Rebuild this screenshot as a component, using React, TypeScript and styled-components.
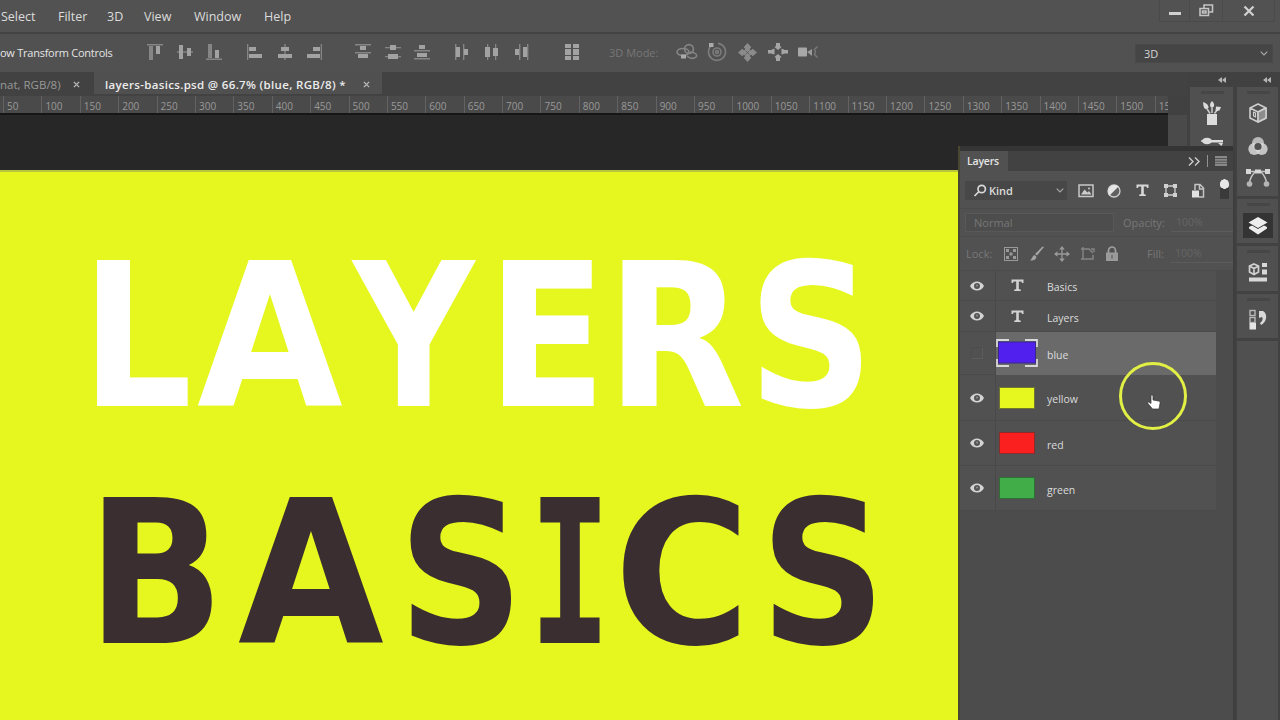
import React from 'react';
import styled, { createGlobalStyle } from 'styled-components';

const Global = createGlobalStyle`
  * { box-sizing: border-box; }
  body { margin: 0; overflow: hidden; background: #282828; }
`;

const App_ = styled.div`
  position: relative;
  width: 1280px;
  height: 720px;
  overflow: hidden;
  display: flex;
  flex-direction: column;
  background: #282828;
  color: #d6d6d6;
  font-family: 'Open Sans', 'Noto Sans', sans-serif;
  white-space: nowrap;
`;

/* ---------- menu bar ---------- */
const MenuBar = styled.header`
  height: 34px;
  flex: none;
  display: flex;
  justify-content: space-between;
  background: #525252;
  border-bottom: 2px solid #434343;
`;
const Menu = styled.nav`
  display: flex;
  padding-left: 1px;
  font-size: 12.5px;
  line-height: 33px;
  color: #dcdcdc;
`;
const MenuItem = styled.span<{ $w: number }>`
  width: ${(p) => p.$w}px;
`;
const WindowButtons = styled.div`
  display: flex;
  height: 22px;
  margin-right: 5px;
  border: 1px solid #4a4a4a;
  border-top: 0;
`;
const WindowButton = styled.div<{ $w: number }>`
  width: ${(p) => p.$w}px;
  display: flex;
  align-items: center;
  justify-content: center;
  & + & { border-left: 1px solid #4b4b4b; }
`;

/* ---------- options bar ---------- */
const OptionsBar = styled.div`
  height: 38px;
  flex: none;
  display: flex;
  align-items: center;
  background: #515151;
  font-size: 11px;
`;
const TransformLabel = styled.span`
  width: 147px;
  margin-top: -2px;
  letter-spacing: -0.25px;
  color: #e4e4e4;
`;
const IconGroup = styled.div<{ $w: number; $slot: number }>`
  width: ${(p) => p.$w}px;
  display: flex;
  align-items: center;
  margin-top: -2px;
  & > svg { flex: none; margin-right: ${(p) => p.$slot - 16}px; }
`;
const ModeIcons = styled.div`
  display: grid;
  grid-template-columns: repeat(5, 30.3px);
  align-items: center;
  justify-items: center;
  margin-top: -2px;
`;
const ModeLabel = styled.span`
  width: 63px;
  color: #777;
  margin-top: -2px;
`;
const WorkspaceSelect = styled.div`
  width: 138px;
  height: 19px;
  margin-left: auto;
  margin-right: 7px;
  padding: 0 4px 0 8px;
  display: flex;
  align-items: center;
  justify-content: space-between;
  background: #454545;
  border: 1px solid #494949;
  font-size: 11px;
`;

/* ---------- workspace ---------- */
const Workspace = styled.div`
  flex: 1;
  min-height: 0;
  display: flex;
  background: #414141;
`;
const DocumentArea = styled.main`
  width: 1187px;
  display: flex;
  flex-direction: column;
`;
const TabBar = styled.div`
  height: 24px;
  flex: none;
  display: flex;
  background: #424242;
  font-size: 11.5px;
`;
const Tab = styled.div<{ $w: number; $active?: boolean }>`
  width: ${(p) => p.$w}px;
  height: 22px;
  display: flex;
  align-items: center;
  justify-content: space-between;
  padding: 2px ${(p) => (p.$active ? 12 : 14)}px 0 ${(p) => (p.$active ? 11 : 0)}px;
  background: ${(p) => (p.$active ? '#505050' : '#424242')};
  color: ${(p) => (p.$active ? '#ececec' : '#989898')};
  font-weight: ${(p) => (p.$active ? 600 : 400)};
  letter-spacing: ${(p) => (p.$active ? 0.33 : 0)}px;
`;
const Ruler = styled.div`
  width: 1168px;
  height: 19px;
  flex: none;
  display: flex;
  overflow: hidden;
  padding-left: 3px;
  background: #4a4a4a;
  border-bottom: 2px solid #161616;
`;
const Tick = styled.div`
  width: 38.4px;
  flex: none;
  padding-left: 3px;
  border-left: 1px solid #626262;
  font-size: 10px;
  line-height: 20px;
  color: #999;
`;
const CanvasRow = styled.div`
  flex: 1;
  display: flex;
  min-height: 0;
  background: #4a4a4a;
`;
const Pasteboard = styled.div`
  width: 1168px;
  padding-top: 55px;
  background: #272727;
`;
const Artboard = styled.div`
  width: 958px;
  height: 560px;
  padding-top: 47px;
  border-top: 2px solid #b9c63c;
  background: #e6f61f;
  font-family: 'DejaVu Sans Condensed', 'DejaVu Sans', sans-serif;
  font-stretch: condensed;
  font-weight: 700;
  font-size: 200.3px;
  font-kerning: none;
`;
const Headline = styled.div<{ $left: number; $dark?: boolean }>`
  height: 236.5px;
  line-height: 236.5px;
  display: flex;
  padding-left: ${(p) => p.$left}px;
  color: ${(p) => (p.$dark ? '#3a2e31' : '#fff')};
`;
const Glyph = styled.span<{ $w: number; $sx?: number; $mono?: boolean }>`
  width: ${(p) => p.$w}px;
  flex: none;
  transform: scaleX(${(p) => p.$sx || 1});
  transform-origin: left;
  ${(p) => p.$mono && "font-family: 'DejaVu Sans Mono', monospace;"}
`;

/* ---------- docks ---------- */
const Dock = styled.aside<{ $w: number; $gap: number }>`
  width: ${(p) => p.$w}px;
  margin-left: ${(p) => p.$gap}px;
  display: flex;
  flex-direction: column;
`;
const DockHead = styled.div`
  height: 15px;
  flex: none;
  display: flex;
  justify-content: flex-end;
  align-items: center;
  padding-right: 7px;
`;
const DockGroup = styled.div<{ $h: number }>`
  height: ${(p) => p.$h}px;
  flex: none;
  display: flex;
  flex-direction: column;
  align-items: center;
  padding-left: 1px;
  background: #505050;
  border-bottom: 3px solid #424242;
`;
const DockFill = styled.div`
  flex: 1;
  background: #505050;
`;
const Grip = styled.div`
  width: 23px;
  height: 3px;
  margin-top: 4px;
  flex: none;
  background: #464646;
`;
const DockIcon = styled.div<{ $h: number; $selected?: boolean }>`
  width: 30px;
  height: ${(p) => p.$h}px;
  flex: none;
  display: flex;
  align-items: center;
  justify-content: center;
  background: ${(p) => (p.$selected ? '#343434' : 'transparent')};
`;

/* ---------- floating layers panel ---------- */
const Panel = styled.section`
  position: absolute;
  left: 958px;
  top: 146px;
  width: 277px;
  height: 574px;
  display: flex;
  flex-direction: column;
  border-left: 2px solid #484832;
  border-right: 2px solid #3e3e3e;
  background: #4c4c4c;
  font-size: 11px;
`;
const PanelTabs = styled.div`
  height: 25px;
  flex: none;
  display: flex;
  justify-content: space-between;
  border-top: 5px solid #353535;
  background: #424242;
`;
const PanelTab = styled.div`
  width: 48px;
  padding-left: 7px;
  background: #515151;
  color: #e4e4e4;
  font-weight: 600;
  font-size: 10.5px;
  line-height: 20px;
  letter-spacing: -0.2px;
`;
const PanelTools = styled.div`
  display: flex;
  align-items: center;
  gap: 7px;
  padding-right: 6px;
`;
const ToolDivider = styled.i`
  width: 1px;
  height: 12px;
  background: #929292;
`;
const PanelRow = styled.div<{ $h: number; $dim?: boolean }>`
  height: ${(p) => p.$h}px;
  flex: none;
  display: flex;
  align-items: center;
  padding-left: 5px;
  background: #515151;
  border-bottom: 1px solid #4b4b4b;
  color: ${(p) => (p.$dim ? '#777' : '#dcdcdc')};
`;
const KindSelect = styled.div`
  width: 102px;
  height: 19px;
  margin-top: 2px;
  margin-right: 5px;
  padding: 0 3px 0 8px;
  display: flex;
  align-items: center;
  gap: 2px;
  background: #474747;
  font-weight: 600;
  & > svg:last-child { margin-left: auto; }
`;
const FilterIcons = styled.div`
  display: grid;
  grid-template-columns: repeat(5, 28px);
  align-items: center;
  justify-items: center;
  margin-top: 2px;
`;
const Toggle = styled.div`
  width: 9px;
  height: 20px;
  margin-left: 8px;
  margin-top: -2px;
  border-radius: 5px 5px 0 0;
  background: radial-gradient(circle at 4.5px 5px, #e6e6e6 4.5px, transparent 5px), linear-gradient(#515151 9px, #3a3a3a 9px);
`;
const BlendSelect = styled.div`
  width: 149px;
  height: 19px;
  padding-left: 8px;
  line-height: 17px;
  border: 1px solid #585858;
  background: #4d4d4d;
`;
const DimLabel = styled.span<{ $w: number; $left?: number }>`
  width: ${(p) => p.$w}px;
  margin-left: ${(p) => p.$left || 0}px;
`;
const DimValue = styled.span`
  flex: 1;
  height: 18px;
  padding-left: 5px;
  line-height: 17px;
  font-size: 10.5px;
  color: #656565;
  border-bottom: 1px solid #5c5c5c;
`;
const LockIcons = styled.div`
  display: flex;
  gap: 9.5px;
  width: 144px;
  margin-left: -1px;
`;
const LayerList = styled.div`
  width: 256px;
  flex: none;
`;
const Layer = styled.div<{ $h: number }>`
  height: ${(p) => p.$h}px;
  display: flex;
  background: #515151;
`;
const EyeCell = styled.div`
  width: 36px;
  display: flex;
  align-items: center;
  justify-content: center;
  padding-right: 1px;
  border-right: 1px solid #494949;
  border-bottom: 1px solid #4a4a4a;
`;
const EmptyEye = styled.i`
  width: 12px;
  height: 12px;
  border: 1px solid #5c5c5c;
  border-top-color: #4c4c4c;
  border-left-color: #4c4c4c;
`;
const LayerBody = styled.div<{ $selected?: boolean }>`
  flex: 1;
  display: flex;
  align-items: center;
  background: ${(p) => (p.$selected ? '#6a6a6a' : '#515151')};
  border-bottom: 1px solid ${(p) => (p.$selected ? '#6a6a6a' : '#4a4a4a')};
`;
const ThumbCell = styled.div`
  width: 51px;
  display: flex;
  justify-content: center;
  padding-right: 9px;
`;
const Swatch = styled.div<{ $c: string; $edge: string }>`
  width: 36px;
  height: 22px;
  border: 1px solid ${(p) => p.$edge};
  background: ${(p) => p.$c};
`;
const LayerName = styled.span`
  color: #dcdcdc;
  font-size: 10.5px;
  padding-top: 3px;
`;
const PointerRing = styled.div`
  position: absolute;
  left: 1119px;
  top: 362px;
  width: 68px;
  height: 68px;
  display: flex;
  align-items: center;
  justify-content: center;
  padding: 11px 0 0 2px;
  border: 3px solid #e2ef45;
  border-radius: 50%;
`;

/* ---------- icons ---------- */
type Box = [number, number, number, number];
const Boxes = ({ b, thin = [], c = '#a2a2a2' }: { b: Box[]; thin?: Box[]; c?: string }) => (
  <svg width="16" height="16" viewBox="0 0 16 16">
    {thin.map(([x, y, w, h], i) => <rect key={i} x={x} y={y} width={w} height={h} fill="#858585" />)}
    {b.map(([x, y, w, h], i) => <rect key={i} x={x} y={y} width={w} height={h} fill={c} />)}
  </svg>
);

const alignIcons: [Box[], Box[]][][] = [
  [
    [[[9, 2, 4, 8]], [[0, 0, 16, 1.5], [2, 2, 4, 14]]],
    [[[2, 1, 4, 14], [10, 4, 4, 8]], [[0, 7.3, 16, 1.4]]],
    [[[9, 6, 4, 8]], [[0, 14.5, 16, 1.5], [2, 0, 4, 14]]],
  ],
  [
    [[[2, 3, 7, 4], [2, 10, 13, 4]], [[0, 0, 1.3, 16]]],
    [[[4, 3, 8, 4], [1, 10, 14, 4]], [[7.3, 0, 1.4, 16]]],
    [[[7, 3, 7, 4], [1, 10, 13, 4]], [[14.7, 0, 1.3, 16]]],
  ],
  [
    [[[5, 2, 6, 4], [3, 10, 10, 4]], [[0, 0, 16, 1.5], [0, 8, 16, 1.5]]],
    [[[5, 1, 6, 5], [3, 10, 10, 5]], [[0, 3, 16, 1.3], [0, 12, 16, 1.3]]],
    [[[5, 1, 6, 4], [3, 9, 10, 4]], [[0, 6, 16, 1.5], [0, 14, 16, 1.5]]],
  ],
  [
    [[[2, 3, 4, 10], [10, 5, 4, 6]], [[1, 0, 1.4, 16], [9, 0, 1.4, 16]]],
    [[[1, 3, 5, 10], [9, 4, 5, 8]], [[3, 0, 1.3, 16], [11, 0, 1.3, 16]]],
    [[[2, 5, 4, 6], [10, 3, 4, 10]], [[6, 0, 1.4, 16], [14, 0, 1.4, 16]]],
  ],
];

const Orbit = () => (
  <svg width="22" height="18" viewBox="0 0 22 18" fill="none" stroke="#858585" strokeWidth="1.6">
    <ellipse cx="7" cy="9" rx="6" ry="3.5" /><circle cx="13" cy="6" r="4.4" />
    <path d="M14 9c5 0 8 3 6 5s-6 2-9-1" /><rect x="5" y="11.5" width="5" height="4" fill="#aaa" stroke="none" />
  </svg>
);
const Roll = () => (
  <svg width="20" height="20" viewBox="0 0 20 20" fill="none" stroke="#7d7d7d" strokeWidth="1.6">
    <path d="M5 3a8.5 8.5 0 1 0 6-1.6" /><circle cx="10" cy="10" r="4" /><circle cx="10" cy="10" r="1.4" />
    <rect x="2" y="1" width="4.5" height="4" fill="#aaa" stroke="none" />
  </svg>
);
const Pan = () => (
  <svg width="19" height="19" viewBox="0 0 20 20" fill="#8b8b8b">
    <path d="M10 0l4 4.500-2 2v1.500h1.500l2-2L20 10l-4.500 4-2-2H12v1.500l2 2L10 20l-4-4.500 2-2V12H6.500l-2 2L0 10l4.500-4 2 2H8V6.500l-2-2z" />
    <circle cx="10" cy="10" r="4" fill="#8b8b8b" /><path d="M8 8l4 4M12 8l-4 4" stroke="#606060" />
  </svg>
);
const Slide = () => (
  <svg width="20" height="18" viewBox="0 0 20 18" fill="#a5a5a5">
    <path d="M8 0h4v3l1.500 1-3.500 3-3.500-3L8 3zM8 18h4v-3l1.500-1-3.500-3-3.500 3L8 15zM0 7h3l3.500-1.500v6L3 10.500H0zM20 7h-3l-3.500-1.500v6L17 10.500h3z" />
    <circle cx="10" cy="9" r="2" fill="#515151" />
  </svg>
);
const Camera = () => (
  <svg width="22" height="14" viewBox="0 0 22 14">
    <rect x="1" y="2.500" width="9" height="9" rx="1" fill="#a8a8a8" /><path d="M10 7l5-3v7z" fill="#999" />
    <path d="M20.500 1.500l-3 3 1 2.500-1 2.500 3 3" fill="none" stroke="#777" strokeWidth="1.500" />
  </svg>
);
const Chevron = () => (
  <svg width="8" height="5" viewBox="0 0 8 5"><path d="M.7.700L4 4 7.300.700" fill="none" stroke="#aaa" strokeWidth="1.100" /></svg>
);
const Cross = ({ s = 7, c = '#bbb' }: { s?: number; c?: string }) => (
  <svg width={s} height={s} viewBox="0 0 8 8"><path d="M1 1l6 6M7 1L1 7" stroke={c} strokeWidth="1.500" /></svg>
);
const Collapse = () => (
  <svg width="8" height="6" viewBox="0 0 8 6" fill="#b4b4b4"><path d="M4 0v6L0 3zM8 0v6L4 3z" /></svg>
);
const BrushPot = () => (
  <svg width="20" height="25" viewBox="0 0 20 25" fill="#dcdcdc">
    <rect x="5" y="13" width="10" height="11" /><path d="M8 12.500L4.500 7M10 12V4M12.500 12.500L16 8" stroke="#ccc" strokeWidth="1.500" />
    <path d="M1 1c3 1 6 3 5.500 6L3 8C1 6 1.500 3 1 1zM10 0c2 2 3 4 1.500 6h-3C7.500 4 8 2 10 0zM14 5.500l5 .500-1.500 3.500-4 .500z" />
  </svg>
);
const BrushPresets = () => (
  <svg width="22" height="10" viewBox="0 0 22 10" fill="#dcdcdc">
    <ellipse cx="6" cy="4" rx="5" ry="3.200" /><rect x="0" y="3.300" width="4" height="1.400" /><rect x="10" y="3" width="12" height="2.500" /><path d="M17 6h5l-1.500 3z" />
  </svg>
);
const Cube = () => (
  <svg width="20" height="20" viewBox="0 0 20 20" fill="none" stroke="#cecece" strokeWidth="1.600" strokeLinejoin="round">
    <path d="M10 1l8 4v10l-8 4-8-4V5zM2 5l8 4 8-4M10 9v10" /><path d="M5.500 9l2 1v4l-2-1z" strokeWidth="1.200" />
    <path d="M10 9l8-4v10l-8 4z" fill="#8c8c8c" />
  </svg>
);
const Rings = () => (
  <svg width="20" height="20" viewBox="0 0 20 20">
    <circle cx="10" cy="7" r="6" fill="#b8b8b8" /><circle cx="6.300" cy="13" r="6" fill="#d8d8d8" fillOpacity=".85" />
    <circle cx="13.700" cy="13" r="6" fill="#d8d8d8" fillOpacity=".85" /><circle cx="10" cy="10.500" r="3.600" fill="#505050" />
  </svg>
);
const PathNodes = () => (
  <svg width="26" height="20" viewBox="0 0 26 20" fill="#d6d6d6">
    <path d="M4 3.500h18M10 4C7 7 5 10 4.500 15M16 4c3 3 5 6 5.500 11" fill="none" stroke="#c4c4c4" strokeWidth="1.500" />
    <rect x="1" y="1" width="5" height="5" /><rect x="20" y="1" width="5" height="5" /><rect x="10" y="1.500" width="6" height="4" />
    <circle cx="4.500" cy="16" r="2.800" fill="#b4b4b4" /><circle cx="21.500" cy="16" r="2.800" fill="#b4b4b4" />
  </svg>
);
const Stack = () => (
  <svg width="20" height="20" viewBox="0 0 20 20" fill="#ededed">
    <path d="M10 1l9.500 5.500L10 12 .500 6.500z" /><path d="M1 11l3-1.500 6 3.500 6-3.500 3 1.500v1.500L10 18.500 1 12.500z" />
  </svg>
);
const CubeList = () => (
  <svg width="20" height="20" viewBox="0 0 20 20" fill="#d8d8d8">
    <path d="M6 1l4.500 2v6L6 11.500 1.500 9V3zM1.500 3L6 5.500 10.500 3M6 5v6" fill="none" stroke="#d0d0d0" strokeWidth="1.700" />
    <rect x="14" y="0" width="5" height="4" /><rect x="14" y="6.500" width="5" height="5" /><rect x="1" y="14.500" width="18" height="4" />
  </svg>
);
const History = () => (
  <svg width="20" height="22" viewBox="0 0 20 22">
    <rect x="2" y="1.500" width="5" height="5" fill="none" stroke="#b8b8b8" strokeWidth="1.400" />
    <rect x="2" y="8.500" width="5" height="5" fill="none" stroke="#b8b8b8" strokeWidth="1.400" />
    <rect x="1.500" y="14" width="6.500" height="6.500" fill="#e4e4e4" />
    <path d="M11 2h4c5 3 4 11-2 14l-1-2c3-2 3-5 2-6l-3 1z" fill="#d8d8d8" />
  </svg>
);
const Eye = () => (
  <svg width="16" height="12" viewBox="0 0 16 12">
    <path d="M1 6c3-6 11-6 14 0-3 6-11 6-14 0z" fill="#d4d4d4" /><circle cx="8" cy="6" r="3" fill="#555" /><circle cx="8" cy="5.500" r="1" fill="#929292" />
  </svg>
);
const TypeMark = ({ c = '#d2d2d2' }: { c?: string }) => (
  <svg width="13" height="13" viewBox="0 0 13 13"><path d="M.500.500h12v3.500H11l-.5-1.500H7.800v7.500l2 .700V12H3.200v-1.300l2-.700V2.500H2.500L2 4H.500z" fill={c} /></svg>
);
const Search = () => (
  <svg width="14" height="14" viewBox="0 0 14 14" fill="none" stroke="#d8d8d8" strokeWidth="1.700"><circle cx="8.700" cy="5" r="3.700" /><path d="M6 7.500L1.500 12" /></svg>
);
const Picture = () => (
  <svg width="16" height="14" viewBox="0 0 16 14"><rect x="1" y="1" width="14" height="11.500" fill="none" stroke="#c8c8c8" strokeWidth="1.500" /><path d="M3 10.500l3.500-5 3 3 1.500-1.500 2.500 3.500z" fill="#ccc" /><circle cx="11" cy="4.500" r="1" fill="#ccc" /></svg>
);
const Adjust = () => (
  <svg width="16" height="16" viewBox="0 0 16 16"><circle cx="8" cy="8" r="6" fill="#606060" stroke="#d0d0d0" strokeWidth="1.300" /><path d="M12.500 3.500a6.400 6.400 0 0 0-9 9z" fill="#e4e4e4" /></svg>
);
const Shape = ({ c = '#d0d0d0' }: { c?: string }) => (
  <svg width="15" height="15" viewBox="0 0 15 15" fill={c}><path d="M3 3h9v9H3z" fill="none" stroke={c} strokeWidth="1.300" /><path d="M1 1h4v4H1zM10 1h4v4h-4zM1 10h4v4H1zM10 10h4v4h-4z" /></svg>
);
const SmartObject = () => (
  <svg width="14" height="16" viewBox="0 0 14 16"><path d="M4 7V1.500h5l3.500 3.500v9H8M8.500 1.500V6h4" fill="none" stroke="#c4c4c4" strokeWidth="1.500" /><rect x="1" y="7.500" width="7" height="7" fill="#e0e0e0" /></svg>
);
const Checker = () => (
  <svg width="16" height="16" viewBox="0 0 16 16" fill="#999"><rect x="1.500" y="1.500" width="13" height="13" fill="none" stroke="#999" /><path d="M3 3h3v3H3zM10 3h3v3h-3zM6.500 6.500h3v3h-3zM3 10h3v3H3zM10 10h3v3h-3z" /></svg>
);
const Brush = () => (
  <svg width="16" height="16" viewBox="0 0 16 16" fill="#a4a4a4"><path d="M15 1L8 9.500 6 8 13.500.500zM5.500 9l2 1.800C7 14 4 15 1 14.500c2-1 2-4.500 4.500-5.500z" /></svg>
);
const Move = () => (
  <svg width="16" height="16" viewBox="0 0 16 16" fill="#999"><path d="M8 1v14M1 8h14" stroke="#999" strokeWidth="1.300" /><path d="M8 0l2.800 3.500H5.200zM8 16l2.800-3.500H5.200zM0 8l3.500-2.800v5.600zM16 8l-3.500-2.800v5.600z" /></svg>
);
const ArtboardLock = () => (
  <svg width="16" height="16" viewBox="0 0 16 16" fill="none" stroke="#858585" strokeWidth="1.400"><path d="M3 1v12h10V9M1 3h8l4 4M11 3h3v3M1 13h3" /></svg>
);
const Padlock = () => (
  <svg width="14" height="16" viewBox="0 0 14 16"><path d="M3.500 7V4.500a3.500 3.500 0 0 1 7 0V7" fill="none" stroke="#a0a0a0" strokeWidth="1.700" /><rect x="1" y="6.500" width="12" height="8.500" fill="#9a9a9a" /><rect x="6.300" y="9" width="1.400" height="3.500" fill="#666" /></svg>
);
const SelectedThumb = () => (
  <svg width="42" height="28" viewBox="0 0 42 28">
    <rect x="2.500" y="3" width="37" height="21" fill="#5220ee" stroke="#39288c" />
    <path d="M1 8V1h12M29 1h12v7M1 20v7h12M29 27h12v-7" fill="none" stroke="#d8d8d8" strokeWidth="1.800" />
  </svg>
);
const Hand = () => (
  <svg width="14" height="16" viewBox="0 0 14 16"><path d="M4 1.500c1-1 2 0 2 1V6l5.500 1c1.500.300 1.700 1 1.500 2.500L12 15H5.500L1 9.500c-.7-1 .500-2 1.500-1L4 9.500z" fill="#fff" stroke="#333" strokeWidth=".7" /></svg>
);

/* ---------- data ---------- */
const menus: [string, number][] = [['Select', 57], ['Filter', 49], ['3D', 37], ['View', 50], ['Window', 70], ['Help', 40]];
const marks = Array.from({ length: 31 }, (_, i) => (i + 1) * 50);
const layers = [
  { name: 'Basics', h: 30 },
  { name: 'Layers', h: 31 },
  { name: 'blue', h: 43, selected: true },
  { name: 'yellow', h: 46, color: '#e6f61f', edge: '#70762e' },
  { name: 'red', h: 45, color: '#f9201f', edge: '#8a2c2c' },
  { name: 'green', h: 45, color: '#41ad49', edge: '#2f6f35' },
];
/* letter, advance to the next letter, horizontal scale */
type Letter = { c: string; w: number; sx?: number; mono?: boolean };
const headlineTop: Letter[] = [
  { c: 'L', w: 116, sx: 0.97 }, { c: 'A', w: 156, sx: 1.045 }, { c: 'Y', w: 134, sx: 0.93 },
  { c: 'E', w: 119, sx: 0.97 }, { c: 'R', w: 142 }, { c: 'S', w: 120, sx: 0.97 },
];
const headlineBottom: Letter[] = [
  { c: 'B', w: 151 }, { c: 'A', w: 160, sx: 1.045 }, { c: 'S', w: 131, sx: 0.97 },
  { c: 'I', w: 85, sx: 0.68, mono: true }, { c: 'C', w: 146, sx: 1.03 }, { c: 'S', w: 120, sx: 0.97 },
];

const Word = ({ letters }: { letters: Letter[] }) => (
  <>{letters.map((l, i) => <Glyph key={i} $w={l.w} $sx={l.sx} $mono={l.mono}>{l.c}</Glyph>)}</>
);

export default function App() {
  return (
    <App_>
      <Global />
      <MenuBar>
        <Menu>{menus.map(([m, w]) => <MenuItem key={m} $w={w}>{m}</MenuItem>)}</Menu>
        <WindowButtons>
          <WindowButton $w={29}><svg width="12" height="14"><rect y="8" width="12" height="3" fill="#d0d0d0" /></svg></WindowButton>
          <WindowButton $w={33}>
            <svg width="15" height="13" viewBox="0 0 15 13" fill="none" stroke="#c4c4c4" strokeWidth="1.600"><path d="M5 4V1h8.500v7H10M1 4.500h8.500v7H1zM3.500 7h3.500v2H3.500z" /></svg>
          </WindowButton>
          <WindowButton $w={52}><Cross s={12} c="#d0d0d0" /></WindowButton>
        </WindowButtons>
      </MenuBar>

      <OptionsBar>
        <TransformLabel>ow Transform Controls</TransformLabel>
        {alignIcons.map((g, i) => (
          <IconGroup key={i} $w={[100, 108, 99, 110][i]} $slot={29.5}>
            {g.map(([b, thin], k) => <Boxes key={k} b={b} thin={thin} />)}
          </IconGroup>
        ))}
        <IconGroup $w={45} $slot={16}>
          <Boxes b={[[1, 0, 6, 4], [9, 0, 6, 4], [1, 5, 6, 6], [9, 5, 6, 6], [1, 12, 6, 4], [9, 12, 6, 4]]} />
        </IconGroup>
        <ModeLabel>3D Mode:</ModeLabel>
        <ModeIcons><Orbit /><Roll /><Pan /><Slide /><Camera /></ModeIcons>
        <WorkspaceSelect>3D<Chevron /></WorkspaceSelect>
      </OptionsBar>

      <Workspace>
        <DocumentArea>
          <TabBar>
            <Tab $w={94}>nat, RGB/8)<Cross /></Tab>
            <Tab $w={288} $active>layers-basics.psd @ 66.7% (blue, RGB/8) *<Cross /></Tab>
          </TabBar>
          <Ruler>{marks.map((m) => <Tick key={m}>{m}</Tick>)}</Ruler>
          <CanvasRow>
            <Pasteboard>
              <Artboard>
                <Headline $left={81}><Word letters={headlineTop} /></Headline>
                <Headline $left={87} $dark><Word letters={headlineBottom} /></Headline>
              </Artboard>
            </Pasteboard>
          </CanvasRow>
        </DocumentArea>
        <Dock $w={43} $gap={3}>
          <DockHead><Collapse /></DockHead>
          <DockGroup $h={110}>
            <Grip />
            <DockIcon $h={38}><BrushPot /></DockIcon>
            <DockIcon $h={20}><BrushPresets /></DockIcon>
          </DockGroup>
        </Dock>
        <Dock $w={41} $gap={4}>
          <DockHead><Collapse /></DockHead>
          <DockGroup $h={112}>
            <Grip />
            <DockIcon $h={38}><Cube /></DockIcon>
            <DockIcon $h={28}><Rings /></DockIcon>
            <DockIcon $h={36}><PathNodes /></DockIcon>
          </DockGroup>
          <DockGroup $h={47}><Grip /><DockIcon $h={7} /><DockIcon $h={25} $selected><Stack /></DockIcon></DockGroup>
          <DockGroup $h={48}><Grip /><DockIcon $h={39}><CubeList /></DockIcon></DockGroup>
          <DockGroup $h={47}><Grip /><DockIcon $h={38}><History /></DockIcon></DockGroup>
          <DockFill />
        </Dock>
      </Workspace>

      <Panel>
        <PanelTabs>
          <PanelTab>Layers</PanelTab>
          <PanelTools>
            <svg width="12" height="9" viewBox="0 0 12 9" fill="none" stroke="#ccc" strokeWidth="1.400"><path d="M1 .500l4 4-4 4M7 .500l4 4-4 4" /></svg>
            <ToolDivider />
            <svg width="12" height="10" fill="#888"><path d="M0 0h12v2H0zM0 2.700h12v2H0zM0 5.400h12v2H0zM0 8h12v2H0z" /></svg>
          </PanelTools>
        </PanelTabs>
        <PanelRow $h={38}>
          <KindSelect><Search />Kind<Chevron /></KindSelect>
          <FilterIcons><Picture /><Adjust /><TypeMark c="#d8d8d8" /><Shape /><SmartObject /></FilterIcons>
          <Toggle />
        </PanelRow>
        <PanelRow $h={28} $dim>
          <BlendSelect>Normal</BlendSelect>
          <DimLabel $w={48} $left={9}>Opacity:</DimLabel>
          <DimValue>100%</DimValue>
        </PanelRow>
        <PanelRow $h={34} $dim>
          <DimLabel $w={38} $left={1}>Lock:</DimLabel>
          <LockIcons><Checker /><Brush /><Move /><ArtboardLock /><Padlock /></LockIcons>
          <DimLabel $w={23}>Fill:</DimLabel>
          <DimValue>100%</DimValue>
        </PanelRow>
        <LayerList>
          {layers.map((l) => (
            <Layer key={l.name} $h={l.h}>
              <EyeCell>{l.selected ? <EmptyEye /> : <Eye />}</EyeCell>
              <LayerBody $selected={l.selected}>
                <ThumbCell>
                  {l.selected ? <SelectedThumb /> : l.color ? <Swatch $c={l.color} $edge={l.edge!} /> : <TypeMark />}
                </ThumbCell>
                <LayerName>{l.name}</LayerName>
              </LayerBody>
            </Layer>
          ))}
        </LayerList>
      </Panel>
      <PointerRing><Hand /></PointerRing>
    </App_>
  );
}
